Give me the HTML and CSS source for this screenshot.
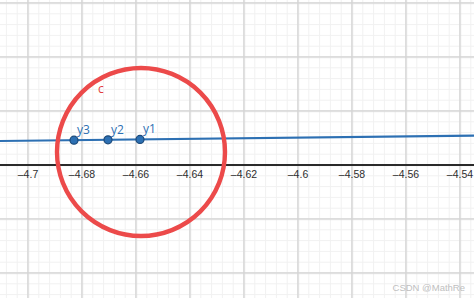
FILE: index.html
```html
<!DOCTYPE html>
<html lang="en">
<head>
    <meta charset="UTF-8">
    <title>Graph</title>
    <link rel="stylesheet" href="styles.css">
</head>
<body>
    <div class="graph">
        <svg class="plot" width="474" height="298" viewBox="0 0 474 298">
            <defs>
                <!-- minor grid every 10.8px, major every 54px -->
                <pattern id="minor" x="27.5" y="2.5" width="10.8" height="10.8" patternUnits="userSpaceOnUse">
                    <rect x="0" y="0" width="1" height="10.8" class="grid-minor"/>
                    <rect x="0" y="0" width="10.8" height="1" class="grid-minor"/>
                </pattern>
                <pattern id="major" x="27.25" y="2.25" width="54" height="54" patternUnits="userSpaceOnUse">
                    <rect x="0" y="0" width="1.5" height="54" class="grid-major"/>
                    <rect x="0" y="0" width="54" height="1.5" class="grid-major"/>
                </pattern>
            </defs>
            <rect width="474" height="298" fill="url(#minor)"/>
            <rect width="474" height="298" fill="url(#major)"/>

            <!-- x axis -->
            <line x1="0" y1="165" x2="474" y2="165" class="axis"/>
            <g class="tick-labels">
                <text x="28" y="178">–4.7</text>
                <text x="82" y="178">–4.68</text>
                <text x="136" y="178">–4.66</text>
                <text x="190" y="178">–4.64</text>
                <text x="244" y="178">–4.62</text>
                <text x="298" y="178">–4.6</text>
                <text x="352" y="178">–4.58</text>
                <text x="406" y="178">–4.56</text>
                <text x="460" y="178">–4.54</text>
            </g>

            <!-- line -->
            <line x1="0" y1="141" x2="474" y2="135.6" class="curve"/>

            <!-- circle c -->
            <circle cx="141" cy="152" r="84" class="circle"/>
            <text x="98" y="93" class="circle-label">c</text>

            <!-- points -->
            <circle cx="74" cy="140.2" r="4" class="point"/>
            <circle cx="108" cy="139.8" r="4" class="point"/>
            <circle cx="140" cy="139.4" r="4" class="point"/>
            <g class="point-labels">
                <text x="77" y="134">y3</text>
                <text x="111" y="134">y2</text>
                <text x="143" y="133">y1</text>
            </g>

            <text x="465" y="291" class="watermark">CSDN @MathRe</text>
        </svg>
    </div>
</body>
</html>
```

FILE: styles.css
```css
body {
    margin: 0;
    padding: 0;
    background-color: #ffffff;
    font-family: "Liberation Sans", Arial, sans-serif;
}

.graph {
    width: 474px;
    height: 298px;
    overflow: hidden;
}

.plot {
    display: block;
}

.grid-minor {
    fill: #f1f1f1;
}

.grid-major {
    fill: #d4d4d4;
}

.axis {
    stroke: #2a2a2a;
    stroke-width: 2;
}

.tick-labels text {
    font-size: 10.5px;
    fill: #2e2e2e;
    text-anchor: middle;
}

.curve {
    stroke: #2d70b3;
    stroke-width: 2.2;
}

.circle {
    fill: none;
    stroke: #ec4a4a;
    stroke-width: 4.4;
}

.circle-label {
    font-family: "Open Sans", sans-serif;
    font-size: 12px;
    fill: #e23c3c;
}

.point {
    fill: #2d70b3;
    stroke: #1c4a7a;
    stroke-width: 1.2;
}

.point-labels text {
    font-family: "Open Sans", sans-serif;
    font-size: 12px;
    fill: #2d70b3;
}

.watermark {
    font-size: 9.5px;
    fill: #c0c0c0;
    text-anchor: end;
}
```
